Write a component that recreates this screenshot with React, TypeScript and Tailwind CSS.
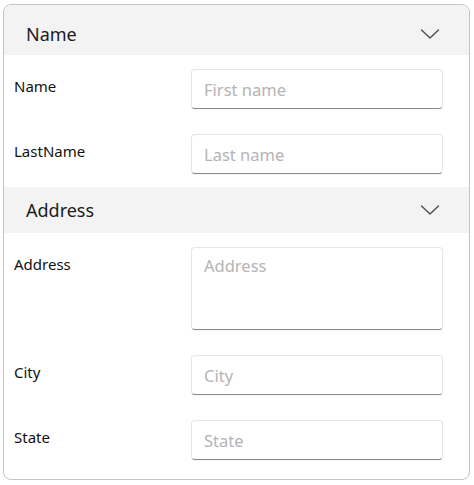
import React from "react";

const FONT = { fontFamily: '"Noto Sans", "Open Sans", sans-serif' };

function Chevron() {
  return (
    <svg width="20" height="12" viewBox="0 0 20 12" className="text-[#505050]">
      <path d="M1.5 2 L10 10 L18.5 2" fill="none" stroke="currentColor" strokeWidth="1.4" strokeLinecap="round" strokeLinejoin="round" />
    </svg>
  );
}

function SectionHeader({ title, tall }: { title: string; tall?: boolean }) {
  return (
    <div
      className={
        "flex items-center justify-between bg-[#f3f3f3] pl-[22px] pr-[29px] " +
        (tall ? "h-[50px] pt-[8px] rounded-t-[7px]" : "h-[46px] mt-[13px]")
      }
    >
      <span className="text-[18px] text-[#1b1b1b]">{title}</span>
      <Chevron />
    </div>
  );
}

function Field({
  label,
  placeholder,
  multiline,
  className,
}: {
  label: string;
  placeholder: string;
  multiline?: boolean;
  className?: string;
}) {
  const box =
    "w-[252px] rounded-[4px] border border-[#e6e6e6] border-b-[#8a8a8a] bg-white px-[12px] text-[16.5px] text-[#1b1b1b] outline-none placeholder:text-[#b4b4b4] shadow-[0_1px_2px_rgba(0,0,0,0.04)]";
  return (
    <div className={"grid grid-cols-[187px_252px] " + (className ?? "")}>
      <label className="pl-[10px] pt-[7px] text-[15px] leading-[20px] text-[#111111]">{label}</label>
      {multiline ? (
        <textarea
          placeholder={placeholder}
          className={box + " h-[83px] resize-none pt-[7px] leading-[22px]"}
          style={FONT}
        />
      ) : (
        <input placeholder={placeholder} className={box + " h-[40px]"} style={FONT} />
      )}
    </div>
  );
}

export default function App() {
  return (
    <div className="w-[474px] h-[485px] bg-white pl-[3px] pt-[4px]" style={FONT}>
      <div className="w-[467px] h-[476px] rounded-[8px] border border-[#c4c4c4] bg-white flex flex-col">
        <SectionHeader title="Name" tall />
        <Field label="Name" placeholder="First name" className="mt-[14px]" />
        <Field label="LastName" placeholder="Last name" className="mt-[25px]" />
        <SectionHeader title="Address" />
        <Field label="Address" placeholder="Address" multiline className="mt-[14px]" />
        <Field label="City" placeholder="City" className="mt-[25px]" />
        <Field label="State" placeholder="State" className="mt-[25px]" />
      </div>
    </div>
  );
}
